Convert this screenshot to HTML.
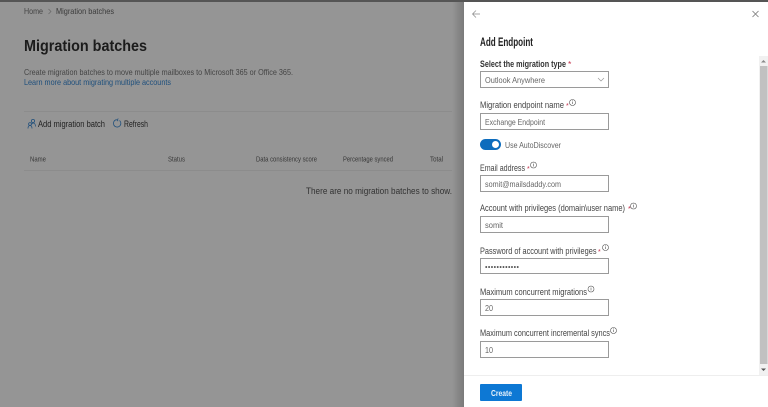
<!DOCTYPE html>
<html><head><meta charset="utf-8"><style>
html,body{margin:0;padding:0;width:768px;height:407px;overflow:hidden;background:#959595}
svg{display:block}
text{font-family:"Liberation Sans",sans-serif;white-space:pre}
.l{font-size:9px;fill:#444}
.v{font-size:8.7px;fill:#666}
.in{fill:#fff;stroke:#9a9a9a;stroke-width:1}
</style></head><body>
<svg width="768" height="407" viewBox="0 0 768 407" xmlns="http://www.w3.org/2000/svg">
<defs><linearGradient id="s" x1="0" x2="1" y1="0" y2="0"><stop offset="0" stop-color="#959595"/><stop offset="1" stop-color="#7a7a7a"/></linearGradient>
<filter id="f" x="0" y="0" width="1" height="1"><feGaussianBlur stdDeviation="0.3"/></filter></defs>
<rect width="768" height="407" fill="#959595"/>
<rect x="452" width="12" height="407" fill="url(#s)"/>
<rect width="768" height="2" fill="#555"/>
<g filter="url(#f)">
<text x="24" y="14" font-size="8.500" fill="#444" textLength="19" lengthAdjust="spacingAndGlyphs">Home</text>
<path d="M48.500 9l2.500 2.500-2.500 2.500" fill="none" stroke="#666" stroke-width=".7"/>
<text x="56" y="14" font-size="8.500" fill="#3a3a3a" textLength="58" lengthAdjust="spacingAndGlyphs">Migration batches</text>
<text x="24" y="51" font-size="15.500" font-weight="700" fill="#1a1a1a" textLength="123" lengthAdjust="spacingAndGlyphs">Migration batches</text>
<text x="24" y="75" font-size="8.500" fill="#444" textLength="269" lengthAdjust="spacingAndGlyphs">Create migration batches to move multiple mailboxes to Microsoft 365 or Office 365.</text>
<text x="24" y="85" font-size="8.500" fill="#1f4f7c" textLength="147" lengthAdjust="spacingAndGlyphs">Learn more about migrating multiple accounts</text>
<rect x="24" y="111" width="428" height="1" fill="#8c8c8c"/>
<g fill="none" stroke="#23517c" stroke-width=".8"><circle cx="33" cy="121" r="1.600"/><circle cx="30" cy="124" r="1.400"/><path d="M28 128.500c0-2 1-3 2-3s2 1 2 3M31.500 124.500c.5-1 1-1.500 1.500-1.500 1.500 0 2.500 1.500 2.500 3.500"/></g>
<text x="38" y="127" font-size="9" fill="#222" textLength="67" lengthAdjust="spacingAndGlyphs">Add migration batch</text>
<path d="M119.500 120.500a3.700 3.700 0 1 1-3-.8M116.800 119.700l1.600-1M116.800 119.700l1.300 1.400" fill="none" stroke="#23517c" stroke-width=".8"/>
<text x="124" y="127" font-size="9" fill="#222" textLength="24" lengthAdjust="spacingAndGlyphs">Refresh</text>
<g font-size="7.500" fill="#383838">
<text x="30" y="161.500" textLength="16" lengthAdjust="spacingAndGlyphs">Name</text>
<text x="168" y="161.500" textLength="17" lengthAdjust="spacingAndGlyphs">Status</text>
<text x="256" y="161.500" textLength="61" lengthAdjust="spacingAndGlyphs">Data consistency score</text>
<text x="343" y="161.500" textLength="50" lengthAdjust="spacingAndGlyphs">Percentage synced</text>
<text x="430" y="161.500" textLength="13" lengthAdjust="spacingAndGlyphs">Total</text>
</g>
<rect x="24" y="170" width="428" height="1" fill="#8c8c8c"/>
<text x="306" y="194" font-size="9" fill="#333" textLength="146" lengthAdjust="spacingAndGlyphs">There are no migration batches to show.</text>
</g>
<rect x="464" y="2" width="304" height="405" fill="#fff"/>
<g filter="url(#f)">
<path d="M480 14h-7.500M476 10.500l-3.500 3.500 3.500 3.500" fill="none" stroke="#888" stroke-width=".7"/>
<path d="M752.500 11l6 6M758.500 11l-6 6" fill="none" stroke="#777" stroke-width=".8"/>
<text x="480" y="46" font-size="12" font-weight="700" fill="#222" textLength="53" lengthAdjust="spacingAndGlyphs">Add Endpoint</text>
<text x="480" y="67" font-size="8.800" font-weight="700" fill="#333" textLength="86" lengthAdjust="spacingAndGlyphs">Select the migration type</text>
<text x="568" y="67" font-size="8.500" fill="#c4314b">*</text>
<rect class="in" x="480.500" y="71.500" width="128" height="16"/>
<text class="v" x="485" y="83" textLength="60" lengthAdjust="spacingAndGlyphs">Outlook Anywhere</text>
<path d="M598 78l3 3 3-3" fill="none" stroke="#999" stroke-width=".7"/>

<text class="l" x="480" y="108" textLength="84" lengthAdjust="spacingAndGlyphs">Migration endpoint name</text>
<text x="566" y="108" font-size="7" fill="#c4314b">*</text>
<g fill="none" stroke="#555" stroke-width=".6"><circle cx="572.500" cy="102.500" r="3"/><path d="M572.500 101.500v2.500M572.500 100.300v.6"/></g>
<rect class="in" x="480.500" y="113.500" width="128" height="16"/>
<text class="v" x="485" y="125" textLength="60" lengthAdjust="spacingAndGlyphs">Exchange Endpoint</text>

<rect x="480" y="139" width="21" height="11" rx="5.500" fill="#0f6cbd"/>
<circle cx="495.500" cy="144.500" r="3.500" fill="#fff"/>
<text class="v" x="505" y="148" textLength="56" lengthAdjust="spacingAndGlyphs">Use AutoDiscover</text>

<text class="l" x="480" y="171" textLength="45" lengthAdjust="spacingAndGlyphs">Email address</text>
<text x="527" y="171" font-size="7" fill="#c4314b">*</text>
<g fill="none" stroke="#555" stroke-width=".6"><circle cx="533.500" cy="165" r="3"/><path d="M533.500 164v2.500M533.500 162.800v.6"/></g>
<rect class="in" x="480.500" y="175.500" width="128" height="16"/>
<text class="v" x="485" y="187" textLength="76" lengthAdjust="spacingAndGlyphs">somit@mailsdaddy.com</text>

<text class="l" x="480" y="211" textLength="145" lengthAdjust="spacingAndGlyphs">Account with privileges (domain\user name)</text>
<text x="628" y="211" font-size="7" fill="#c4314b">*</text>
<g fill="none" stroke="#555" stroke-width=".6"><circle cx="633.500" cy="206" r="3"/><path d="M633.500 205v2.500M633.500 203.800v.6"/></g>
<rect class="in" x="480.500" y="216.500" width="128" height="16"/>
<text class="v" x="485" y="228" textLength="18" lengthAdjust="spacingAndGlyphs">somit</text>

<text class="l" x="480" y="254" textLength="116.500" lengthAdjust="spacingAndGlyphs">Password of account with privileges</text>
<text x="598" y="254" font-size="7" fill="#c4314b">*</text>
<g fill="none" stroke="#555" stroke-width=".6"><circle cx="605.500" cy="247.500" r="3"/><path d="M605.500 246.500v2.500M605.500 245.300v.6"/></g>
<rect class="in" x="480.500" y="258.500" width="128" height="15"/>
<text x="485" y="269.500" font-size="7" fill="#555" textLength="34" lengthAdjust="spacing">••••••••••••</text>

<text class="l" x="480" y="295" textLength="107" lengthAdjust="spacingAndGlyphs">Maximum concurrent migrations</text>
<g fill="none" stroke="#555" stroke-width=".6"><circle cx="591" cy="289" r="3"/><path d="M591 288v2.500M591 286.800v.6"/></g>
<rect class="in" x="480.500" y="299.500" width="128" height="16"/>
<text class="v" x="485" y="311" textLength="8" lengthAdjust="spacingAndGlyphs">20</text>

<text class="l" x="480" y="336" textLength="130" lengthAdjust="spacingAndGlyphs">Maximum concurrent incremental syncs</text>
<g fill="none" stroke="#555" stroke-width=".6"><circle cx="613.500" cy="330.500" r="3"/><path d="M613.500 329.500v2.500M613.500 328.300v.6"/></g>
<rect class="in" x="480.500" y="341.500" width="128" height="16"/>
<text class="v" x="485" y="353" textLength="8" lengthAdjust="spacingAndGlyphs">10</text>

<rect x="464" y="375" width="304" height="1" fill="#eee"/>
<rect x="480" y="384" width="42" height="17" rx="1" fill="#0f78d4"/>
<text x="491" y="396" font-size="8.500" font-weight="700" fill="#e8f2fb" textLength="21" lengthAdjust="spacingAndGlyphs">Create</text>

<rect x="759" y="56" width="9" height="319" fill="#f1f1f1"/>
<rect x="760" y="66" width="7.500" height="298" fill="#c1c1c1"/>
<path d="M763.500 60l-2.500 2.500h5z" fill="#888"/>
<path d="M763.500 371l-2.500-2.500h5z" fill="#555"/>
</g>
</svg>
</body></html>
